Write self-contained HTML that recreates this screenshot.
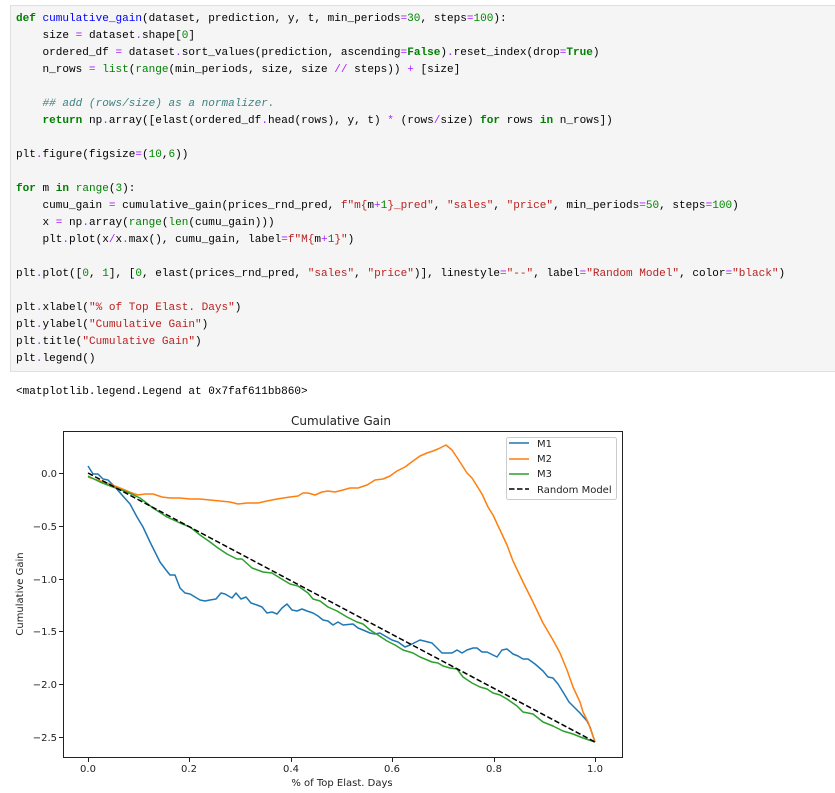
<!DOCTYPE html>
<html><head><meta charset="utf-8"><style>
body{margin:0;background:#fff;width:835px;height:793px;overflow:hidden;position:relative}
.cell{position:absolute;left:10px;top:5px;width:830px;height:367px;background:#f5f5f5;border:1px solid #e0e0e0;box-sizing:border-box}
pre{margin:0;position:absolute;left:16px;top:11px;font-family:"Liberation Mono",monospace;font-size:11.05px;line-height:17px;color:#000}
.k{color:#008000;font-weight:bold}.f{color:#0000ff}.n{color:#008800}.s{color:#ba2121}.o{color:#aa22ff}.c{color:#408080;font-style:italic}.b{color:#008000}
.out{position:absolute;left:16px;top:384px;font-family:"Liberation Mono",monospace;font-size:11.05px;color:#000;margin:0}
svg{position:absolute;left:0;top:0}
svg text{font-family:"DejaVu Sans",sans-serif;font-size:10px;fill:#222}
</style></head><body>
<div class="cell"></div>
<pre><span class="k">def</span> <span class="f">cumulative_gain</span>(dataset, prediction, y, t, min_periods<span class="o">=</span><span class="n">30</span>, steps<span class="o">=</span><span class="n">100</span>):
    size <span class="o">=</span> dataset<span class="o">.</span>shape[<span class="n">0</span>]
    ordered_df <span class="o">=</span> dataset<span class="o">.</span>sort_values(prediction, ascending<span class="o">=</span><span class="k">False</span>)<span class="o">.</span>reset_index(drop<span class="o">=</span><span class="k">True</span>)
    n_rows <span class="o">=</span> <span class="b">list</span>(<span class="b">range</span>(min_periods, size, size <span class="o">//</span> steps)) <span class="o">+</span> [size]

    <span class="c">## add (rows/size) as a normalizer.</span>
    <span class="k">return</span> np<span class="o">.</span>array([elast(ordered_df<span class="o">.</span>head(rows), y, t) <span class="o">*</span> (rows<span class="o">/</span>size) <span class="k">for</span> rows <span class="k">in</span> n_rows])

plt<span class="o">.</span>figure(figsize<span class="o">=</span>(<span class="n">10</span>,<span class="n">6</span>))

<span class="k">for</span> m <span class="k">in</span> <span class="b">range</span>(<span class="n">3</span>):
    cumu_gain <span class="o">=</span> cumulative_gain(prices_rnd_pred, <span class="s">f"m{</span>m<span class="o">+</span><span class="n">1</span><span class="s">}_pred"</span>, <span class="s">"sales"</span>, <span class="s">"price"</span>, min_periods<span class="o">=</span><span class="n">50</span>, steps<span class="o">=</span><span class="n">100</span>)
    x <span class="o">=</span> np<span class="o">.</span>array(<span class="b">range</span>(<span class="b">len</span>(cumu_gain)))
    plt<span class="o">.</span>plot(x<span class="o">/</span>x<span class="o">.</span>max(), cumu_gain, label<span class="o">=</span><span class="s">f"M{</span>m<span class="o">+</span><span class="n">1</span><span class="s">}"</span>)

plt<span class="o">.</span>plot([<span class="n">0</span>, <span class="n">1</span>], [<span class="n">0</span>, elast(prices_rnd_pred, <span class="s">"sales"</span>, <span class="s">"price"</span>)], linestyle<span class="o">=</span><span class="s">"--"</span>, label<span class="o">=</span><span class="s">"Random Model"</span>, color<span class="o">=</span><span class="s">"black"</span>)

plt<span class="o">.</span>xlabel(<span class="s">"% of Top Elast. Days"</span>)
plt<span class="o">.</span>ylabel(<span class="s">"Cumulative Gain"</span>)
plt<span class="o">.</span>title(<span class="s">"Cumulative Gain"</span>)
plt<span class="o">.</span>legend()</pre>
<pre class="out">&lt;matplotlib.legend.Legend at 0x7faf611bb860&gt;</pre>
<svg width="835" height="793" viewBox="0 0 835 793">
<rect x="63.5" y="431.5" width="559" height="326" fill="none" stroke="#222" stroke-width="1"/>
<g stroke="#222" stroke-width="1">
<line x1="59" y1="473.5" x2="63" y2="473.5"/><line x1="59" y1="526.5" x2="63" y2="526.5"/><line x1="59" y1="579.5" x2="63" y2="579.5"/><line x1="59" y1="631.5" x2="63" y2="631.5"/><line x1="59" y1="684.5" x2="63" y2="684.5"/><line x1="59" y1="737.5" x2="63" y2="737.5"/>
<line x1="88.5" y1="758" x2="88.5" y2="762"/><line x1="189.5" y1="758" x2="189.5" y2="762"/><line x1="291.5" y1="758" x2="291.5" y2="762"/><line x1="392.5" y1="758" x2="392.5" y2="762"/><line x1="494.5" y1="758" x2="494.5" y2="762"/><line x1="595.5" y1="758" x2="595.5" y2="762"/>
</g>
<g text-anchor="end">
<text x="57" y="477">0.0</text><text x="57" y="530">−0.5</text><text x="57" y="583">−1.0</text><text x="57" y="635">−1.5</text><text x="57" y="688">−2.0</text><text x="57" y="741">−2.5</text>
</g>
<g text-anchor="middle">
<text x="88" y="772">0.0</text><text x="189" y="772">0.2</text><text x="291" y="772">0.4</text><text x="392" y="772">0.6</text><text x="494" y="772">0.8</text><text x="595" y="772">1.0</text>
<text x="342" y="786">% of Top Elast. Days</text>
<text x="341" y="425" style="font-size:12px">Cumulative Gain</text>
<text transform="translate(23,594) rotate(-90)">Cumulative Gain</text>
</g>
<g fill="none" stroke-width="1.5" stroke-linejoin="round">
<polyline stroke="#1f77b4" points="88,466 93,474 98,474 103,479 108,480 115,487 122,495 130,504 137,517 143,527 150,542 155,552 160,562 166,570 170,575 175,575 180,588 185,593 190,594 195,597 200,600 205,601 210,600 216,599 221,593 225,594 232,598 236,593 241,599 246,597 251,603 257,605 262,607 267,613 272,612 277,614 282,608 287,604 292,610 297,611 302,609 307,611 313,613 318,616 323,620 328,621 333,625 338,622 343,625 353,624 358,628 363,630 370,633 375,634 380,633 385,636 392,640 398,642 405,647 410,645 420,640 432,643 442,653 452,653 457,650 462,653 467,650 473,648 477,648 482,652 487,652 497,657 502,650 507,649 513,654 518,656 523,659 528,659 535,664 543,671 548,677 553,678 558,684 563,692 569,702 574,707 580,713 587,721 590,727 595,742"/>
<polyline stroke="#ff7f0e" points="88,477 97,480 107,483 120,488 132,493 138,495 145,494 153,494 162,497 170,498 180,498 190,499 200,499 210,500 220,501 230,502 238,504 247,503 258,503 267,501 277,499 290,497 298,496 303,493 308,493 315,495 322,492 328,491 335,492 343,490 350,488 358,488 367,485 375,480 383,479 390,476 397,471 405,467 413,461 420,456 427,453 433,451 438,449 442,447 446,445 452,450 458,459 467,473 472,478 482,494 488,507 493,515 500,530 507,545 513,561 523,582 533,602 543,623 553,640 560,653 567,670 573,687 580,702 583,712 588,722 595,742"/>
<polyline stroke="#2ca02c" points="88,476 100,482 113,487 127,492 140,498 153,508 167,517 180,523 190,527 200,535 210,542 218,548 227,554 237,559 242,559 252,568 263,572 272,573 280,578 290,584 298,586 308,593 313,599 320,601 328,607 337,611 347,617 357,622 363,624 370,630 378,635 387,641 395,645 403,650 413,653 420,657 432,662 438,663 443,666 450,668 457,669 463,677 472,683 480,687 487,689 493,693 500,695 507,699 517,706 523,712 533,714 543,722 553,726 563,731 573,734 583,738 595,742"/>
<line x1="88" y1="473" x2="595" y2="742" stroke="#000" stroke-dasharray="5.5,2.5"/>
</g>
<rect x="506.5" y="437.5" width="110" height="62" rx="2" fill="#fff" fill-opacity="0.8" stroke="#ccc"/>
<g stroke-width="1.5">
<line x1="509" y1="443" x2="529" y2="443" stroke="#1f77b4"/>
<line x1="509" y1="459" x2="529" y2="459" stroke="#ff7f0e"/>
<line x1="509" y1="474" x2="529" y2="474" stroke="#2ca02c"/>
<line x1="509" y1="489" x2="529" y2="489" stroke="#000" stroke-dasharray="5.5,2.5"/>
</g>
<text x="537" y="447">M1</text><text x="537" y="462">M2</text><text x="537" y="477">M3</text><text x="537" y="493">Random Model</text>
</svg>
</body></html>
